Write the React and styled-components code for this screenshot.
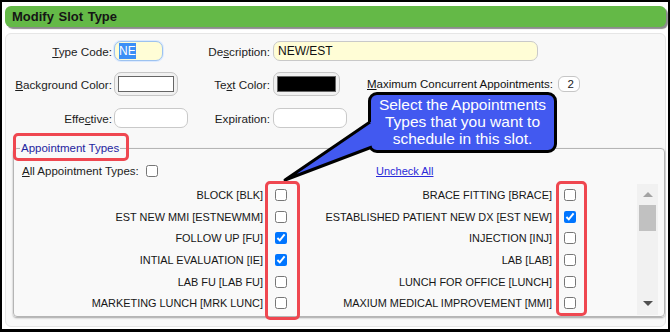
import React from 'react';
import styled, { createGlobalStyle } from 'styled-components';

const GlobalStyle = createGlobalStyle`
  body {
    margin: 0;
    font-family: "Liberation Sans", Arial, sans-serif;
    background: #fff;
  }
  * { box-sizing: border-box; }
`;

const leftTypes = [
  { name: 'BLOCK [BLK]', checked: false },
  { name: 'EST NEW MMI [ESTNEWMM]', checked: false },
  { name: 'FOLLOW UP [FU]', checked: true },
  { name: 'INTIAL EVALUATION [IE]', checked: true },
  { name: 'LAB FU [LAB FU]', checked: false },
  { name: 'MARKETING LUNCH [MRK LUNC]', checked: false },
];

const rightTypes = [
  { name: 'BRACE FITTING [BRACE]', checked: false },
  { name: 'ESTABLISHED PATIENT NEW DX [EST NEW]', checked: true },
  { name: 'INJECTION [INJ]', checked: false },
  { name: 'LAB [LAB]', checked: false },
  { name: 'LUNCH FOR OFFICE [LUNCH]', checked: false },
  { name: 'MAXIUM MEDICAL IMPROVEMENT [MMI]', checked: false },
];

const calloutLines = ['Select the Appointments', 'Types that you want to', 'schedule in this slot.'];

const App = () => {
  return (
    <>
      <GlobalStyle />
      <Frame>
        <Header>Modify Slot Type</Header>
        <Panel>
          <FormRow $h={20}>
            <Label><Key>T</Key>ype Code:</Label>
            <TextInput $w={49} $yellow $focus>
              <Selected>NE</Selected>
            </TextInput>
            <Label $pr={3}>De<Key>s</Key>cription:</Label>
            <TextInput $w={265} $yellow>NEW/EST</TextInput>
          </FormRow>

          <FormRow $h={24} $mt={11}>
            <Label><Key>B</Key>ackground Color:</Label>
            <ColorInput $w={64}><Swatch $color="#fff" /></ColorInput>
            <Label $pr={3}>Te<Key>x</Key>t Color:</Label>
            <Inline>
              <ColorInput $w={67}><Swatch $color="#000" /></ColorInput>
              <MaxLabel><Key>M</Key>aximum Concurrent Appointments:</MaxLabel>
              <SmallInput>2</SmallInput>
            </Inline>
          </FormRow>

          <FormRow $h={19} $mt={12}>
            <Label>Effe<Key>c</Key>tive:</Label>
            <TextInput $w={74} />
            <Label $pr={3}>Expiration:</Label>
            <TextInput $w={74} />
          </FormRow>

          <Fieldset>
            <Legend>Appointment Types</Legend>
            <TopRow>
              <AllLabel>
                <Key>A</Key>ll Appointment Types:
                <Check type="checkbox" readOnly />
              </AllLabel>
              <LinkText>Uncheck All</LinkText>
            </TopRow>
            <ListArea>
              <TypeGrid>
                {leftTypes.map((t, i) => (
                  <React.Fragment key={t.name}>
                    <TypeCell>
                      <TypeName>{t.name}</TypeName>
                      <Check type="checkbox" readOnly checked={t.checked} />
                    </TypeCell>
                    <TypeCell>
                      <TypeName>{rightTypes[i].name}</TypeName>
                      <Check type="checkbox" readOnly checked={rightTypes[i].checked} />
                    </TypeCell>
                  </React.Fragment>
                ))}
              </TypeGrid>
              <Scrollbar>
                <ArrowUp />
                <Thumb />
                <Spacer />
                <ArrowDown />
              </Scrollbar>
            </ListArea>
          </Fieldset>
        </Panel>

        <Callout>
          {calloutLines.map((line) => (
            <CalloutLine key={line}>{line}</CalloutLine>
          ))}
        </Callout>
        <Tail viewBox="278 114 100 72" width="100" height="72">
          <polygon points="285,180 369,122 377,122 377,148 371,148" fill="#4259f0" />
          <polyline points="370,122 285,180 372,147" fill="none" stroke="#000" strokeWidth="3" strokeLinejoin="round" />
        </Tail>

        <Marker $x={13} $y={133} $w={116} $h={28} />
        <Marker $x={265} $y={181} $w={35} $h={139} />
        <Marker $x={556} $y={181} $w={31} $h={135} />
      </Frame>
    </>
  );
};

const Frame = styled.div`
  position: relative;
  width: 670px;
  height: 332px;
  border: 2px solid #000;
  border-bottom-width: 3px;
  background: #fff;
  padding: 4px 2px 0 3px;
  color: #1a1a1a;
`;

const Header = styled.div`
  height: 21px;
  background: #64b947;
  border-radius: 6px;
  box-shadow: 2px 2px 1px #8c8c8c;
  padding-left: 7px;
  font-size: 13px;
  font-weight: bold;
  line-height: 21px;
  color: #151515;
  word-spacing: 1px;
`;

const Panel = styled.div`
  margin-top: 6px;
  height: 294px;
  background: #f8f8f8;
  border: 1px solid #e6e6e6;
  border-radius: 6px;
  padding-top: 7px;
`;

const FormRow = styled.div`
  display: grid;
  grid-template-columns: 108px 80px 79px auto;
  align-items: center;
  height: ${(p) => p.$h}px;
  margin-top: ${(p) => p.$mt || 0}px;
`;

const Label = styled.label`
  text-align: right;
  padding-right: ${(p) => p.$pr || 2}px;
  font-size: 11.7px;
  white-space: nowrap;
  color: #1c1c1c;
`;

const Key = styled.u`
  text-decoration: underline;
`;

const TextInput = styled.div`
  width: ${(p) => p.$w}px;
  height: 20px;
  border-radius: 7px;
  border: 1px solid ${(p) => (p.$focus ? '#9dc2ef' : '#c9c9c9')};
  box-shadow: ${(p) => (p.$focus ? '0 0 0 1px #dceaff' : 'none')};
  background: ${(p) => (p.$yellow ? '#fffdd6' : '#fff')};
  font-size: 12px;
  line-height: 18px;
  padding-left: 4px;
  color: #111;
`;

const Selected = styled.span`
  background: #3b8ff6;
  color: #fff;
  padding: 1px 0;
`;

const ColorInput = styled.div`
  width: ${(p) => p.$w}px;
  height: 24px;
  border-radius: 7px;
  border: 1px solid #c6c6c6;
  background: #f1f1f1;
  padding: 3px;
`;

const Swatch = styled.div`
  height: 100%;
  background: ${(p) => p.$color};
  border: 1px solid #666;
`;

const Inline = styled.div`
  display: flex;
  align-items: center;
`;

const MaxLabel = styled.span`
  margin-left: 27px;
  font-size: 11.5px;
  white-space: nowrap;
  color: #111;
`;

const SmallInput = styled.div`
  margin-left: 5px;
  width: 22px;
  height: 16px;
  border: 1px solid #c6c6c6;
  border-radius: 6px;
  background: #fff;
  font-size: 11.5px;
  line-height: 14px;
  text-align: right;
  padding-right: 5px;
`;

const Fieldset = styled.fieldset`
  margin: 14px 0 0 7px;
  height: 176px;
  border: 1px solid #b5b5b5;
  border-radius: 4px;
  box-shadow: 0 1px 2px rgba(0, 0, 0, 0.35);
  padding: 8px 6px 0 6px;
  background: #f9f9f9;
`;

const Legend = styled.legend`
  padding: 0 1px;
  font-size: 11.5px;
  line-height: 14px;
  color: #1f24a0;
`;

const TopRow = styled.div`
  display: grid;
  grid-template-columns: 356px auto;
  align-items: center;
  height: 16px;
`;

const AllLabel = styled.label`
  display: flex;
  align-items: center;
  padding-left: 2px;
  font-size: 11.5px;
  color: #1c1c1c;
  input { margin-left: 7px; }
`;

const LinkText = styled.span`
  font-size: 11px;
  color: #2a2ad8;
  text-decoration: underline;
`;

const ListArea = styled.div`
  display: flex;
  margin-top: 5px;
  height: 131px;
`;

const TypeGrid = styled.div`
  display: grid;
  grid-template-columns: 272px 289px;
  grid-template-rows: repeat(6, 21.7px);
`;

const TypeCell = styled.div`
  display: flex;
  align-items: center;
  justify-content: flex-end;
  padding-right: 5px;
`;

const TypeName = styled.span`
  font-size: 10.9px;
  color: #161616;
  white-space: nowrap;
  margin-right: 12px;
`;

const Check = styled.input`
  width: 12px;
  height: 12px;
  margin: 0;
  flex: none;
`;

const Scrollbar = styled.div`
  margin-left: auto;
  width: 21px;
  height: 131px;
  background: #f1f1f1;
  display: flex;
  flex-direction: column;
  align-items: center;
  padding-top: 8px;
  padding-bottom: 9px;
`;

const ArrowUp = styled.div`
  width: 0;
  height: 0;
  border-left: 5px solid transparent;
  border-right: 5px solid transparent;
  border-bottom: 5px solid #a3a3a3;
`;

const ArrowDown = styled.div`
  width: 0;
  height: 0;
  border-left: 5px solid transparent;
  border-right: 5px solid transparent;
  border-top: 5px solid #505050;
`;

const Thumb = styled.div`
  margin-top: 8px;
  width: 17px;
  height: 26px;
  background: #c1c1c1;
`;

const Spacer = styled.div`
  flex: 1;
`;

const Callout = styled.div`
  position: absolute;
  left: 366px;
  top: 90px;
  width: 189px;
  height: 61px;
  background: #4259f0;
  border: 3px solid #000;
  border-radius: 9px;
  color: #fff;
  font-size: 15.5px;
  line-height: 17px;
  text-align: center;
  padding-top: 1px;
`;

const CalloutLine = styled.div`
  white-space: nowrap;
`;

const Tail = styled.svg`
  position: absolute;
  left: 276px;
  top: 112px;
  overflow: visible;
`;

const Marker = styled.div`
  position: absolute;
  left: ${(p) => p.$x - 2}px;
  top: ${(p) => p.$y - 2}px;
  width: ${(p) => p.$w}px;
  height: ${(p) => p.$h}px;
  border: 3px solid #ef4750;
  border-radius: 5px;
`;

export default App;
